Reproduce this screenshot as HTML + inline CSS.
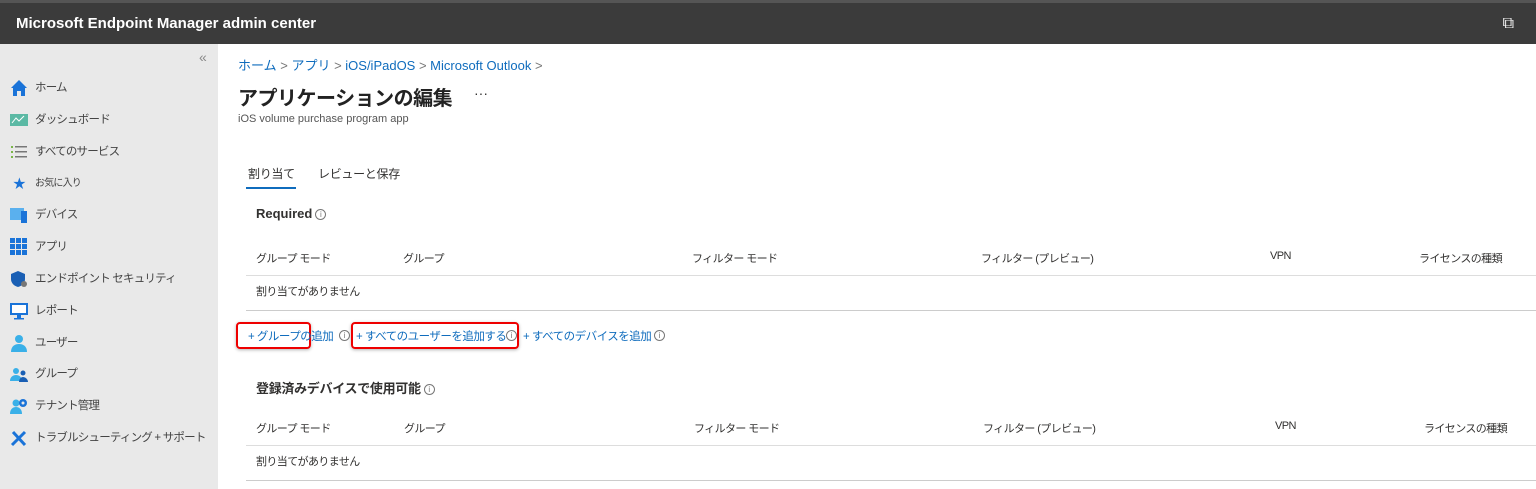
<!DOCTYPE html>
<html><head><meta charset="utf-8"><style>
*{margin:0;padding:0;box-sizing:border-box}
body{width:1536px;height:489px;overflow:hidden;background:#fff;font-family:"Liberation Sans","Noto Sans CJK JP",sans-serif;color:#323130;position:relative}
.top{position:absolute;left:0;top:0;width:1536px;height:44px;background:#3b3b3b;border-top:3px solid #555;color:#fff;font-weight:bold;font-size:15px;line-height:41px;padding-left:16px}
.side{position:absolute;left:0;top:44px;width:218px;height:445px;background:#e9e9e9}
.side .it{position:absolute;left:10px;font-size:11.5px;letter-spacing:-0.8px;white-space:nowrap;height:20px;line-height:20px;display:flex;align-items:center;color:#444}
.side .ic{width:18px;height:18px;margin-right:7px;display:inline-block;flex:none}
.a{position:absolute;font-size:12px;white-space:nowrap}
.h{font-size:11px;letter-spacing:-0.6px}
.l{font-size:11.5px;letter-spacing:-0.5px}
.blue{color:#0f6cbd}
.hline{position:absolute;height:1px;background:#ddd}
.red{position:absolute;border:2px solid #e00;border-radius:4px;box-shadow:0 1px 3px rgba(0,0,0,.3)}
.i{display:inline-block;width:11px;height:11px;border:1px solid #777;border-radius:50%;font-size:8px;line-height:9px;text-align:center;color:#777;vertical-align:1px;margin-left:3px;letter-spacing:0}
</style></head><body>
<div class="top">Microsoft Endpoint Manager admin center<span style="position:absolute;right:22px;top:0;font-weight:normal;font-size:16px">⧉</span></div>
<div class="side">
<div style="position:absolute;left:199px;top:5px;color:#888;font-size:14px">«</div>
<div class="it" style="top:34px"><svg class="ic" viewBox="0 0 18 18"><path d="M9 1L1 9h2v8h4v-5h4v5h4V9h2z" fill="#1a73d8"/></svg>ホーム</div>
<div class="it" style="top:66px"><svg class="ic" viewBox="0 0 18 18"><rect x="0" y="3" width="18" height="12" fill="#5bb9a4"/><path d="M2 12l4-5 3 3 5-5" stroke="#fff" fill="none"/></svg>ダッシュボード</div>
<div class="it" style="top:98px"><svg class="ic" viewBox="0 0 18 18"><g fill="#7ab648"><rect x="1" y="3" width="2" height="2"/><rect x="1" y="8" width="2" height="2"/><rect x="1" y="13" width="2" height="2"/></g><g fill="#777"><rect x="5" y="3" width="12" height="1.5"/><rect x="5" y="8" width="12" height="1.5"/><rect x="5" y="13" width="12" height="1.5"/></g></svg>すべてのサービス</div>
<div class="it" style="top:130px;font-size:10px"><span class="ic" style="color:#1a73d8;font-size:13px;text-align:center;line-height:18px">★</span>お気に入り</div>
<div class="it" style="top:161px"><svg class="ic" viewBox="0 0 18 18"><rect x="0" y="2" width="14" height="12" fill="#5ab0ee"/><rect x="11" y="5" width="6" height="12" fill="#1a73d8"/></svg>デバイス</div>
<div class="it" style="top:193px"><svg class="ic" viewBox="0 0 18 18"><g fill="#1a73d8"><rect x="0" y="0" width="5" height="5"/><rect x="6" y="0" width="5" height="5"/><rect x="12" y="0" width="5" height="5"/><rect x="0" y="6" width="5" height="5"/><rect x="6" y="6" width="5" height="5"/><rect x="12" y="6" width="5" height="5"/><rect x="0" y="12" width="5" height="5"/><rect x="6" y="12" width="5" height="5"/><rect x="12" y="12" width="5" height="5"/></g></svg>アプリ</div>
<div class="it" style="top:225px"><svg class="ic" viewBox="0 0 18 18"><path d="M8 1l7 3v5c0 4-3 7-7 8-4-1-7-4-7-8V4z" fill="#1a5fb4"/><circle cx="14" cy="14" r="3" fill="#777"/></svg>エンドポイント セキュリティ</div>
<div class="it" style="top:257px"><svg class="ic" viewBox="0 0 18 18"><rect x="0" y="1" width="18" height="12" fill="#1a73d8"/><rect x="2" y="3" width="14" height="8" fill="#fff"/><rect x="7" y="13" width="4" height="3" fill="#1a73d8"/><rect x="4" y="16" width="10" height="1.5" fill="#1a73d8"/></svg>レポート</div>
<div class="it" style="top:289px"><svg class="ic" viewBox="0 0 18 18"><circle cx="9" cy="5" r="4" fill="#3ab0e8"/><path d="M1 18c0-6 4-8 8-8s8 2 8 8z" fill="#3ab0e8"/></svg>ユーザー</div>
<div class="it" style="top:320px"><svg class="ic" viewBox="0 0 18 18"><circle cx="6" cy="6" r="3" fill="#3ab0e8"/><path d="M0 16c0-4 3-6 6-6s6 2 6 6z" fill="#3ab0e8"/><circle cx="13" cy="8" r="2.5" fill="#1a5fb4"/><path d="M9 17c0-3 2-5 4-5s5 2 5 5z" fill="#1a5fb4"/></svg>グループ</div>
<div class="it" style="top:352px"><svg class="ic" viewBox="0 0 18 18"><circle cx="6" cy="6" r="3.5" fill="#3ab0e8"/><path d="M0 17c0-5 3-7 6-7s6 2 6 7z" fill="#3ab0e8"/><circle cx="13" cy="6" r="4" fill="#1a73d8"/><circle cx="13" cy="6" r="1.5" fill="#e9e9e9"/></svg>テナント管理</div>
<div class="it" style="top:384px"><svg class="ic" viewBox="0 0 18 18"><path d="M2 16L15 3M3 3l12 13" stroke="#1a73d8" stroke-width="3"/></svg>トラブルシューティング + サポート</div>
</div>

<div class="a blue" style="left:238px;top:55px;font-size:13px">ホーム <span style="color:#777">&gt;</span> アプリ <span style="color:#777">&gt;</span> iOS/iPadOS <span style="color:#777">&gt;</span> Microsoft Outlook <span style="color:#777">&gt;</span></div>
<div class="a" style="left:238px;top:82px;font-size:20px;font-weight:bold;color:#222;letter-spacing:-0.5px">アプリケーションの編集</div>
<div class="a" style="left:474px;top:85px;font-size:14px">···</div>
<div class="a" style="left:238px;top:113px;font-size:11px;color:#555">iOS volume purchase program app</div>
<div class="a" style="left:248px;top:165px;letter-spacing:-0.3px">割り当て</div>
<div style="position:absolute;left:246px;top:187px;width:50px;height:2px;background:#0f6cbd"></div>
<div class="a" style="left:318px;top:165px;letter-spacing:-0.3px">レビューと保存</div>
<div class="a" style="left:256px;top:206px;font-weight:bold;font-size:13px">Required<span class="i" style="font-weight:normal">i</span></div>

<div class="a h" style="left:256px;top:250px">グループ モード</div>
<div class="a h" style="left:403px;top:250px">グループ</div>
<div class="a h" style="left:692px;top:250px">フィルター モード</div>
<div class="a h" style="left:981px;top:250px">フィルター (プレビュー)</div>
<div class="a h" style="left:1270px;top:250px">VPN</div>
<div class="a h" style="left:1419px;top:250px">ライセンスの種類</div>
<div class="hline" style="left:246px;top:275px;width:1290px"></div>
<div class="a h" style="left:256px;top:283px">割り当てがありません</div>
<div class="hline" style="left:246px;top:310px;width:1290px;background:#ccc"></div>

<div class="red" style="left:236px;top:322px;width:75px;height:27px"></div>
<div class="red" style="left:351px;top:322px;width:168px;height:27px"></div>
<div class="a blue l" style="left:248px;top:328px">+ グループの追加</div><div class="a" style="left:336px;top:328px"><span class="i">i</span></div>
<div class="a blue l" style="left:356px;top:328px">+ すべてのユーザーを追加する</div><div class="a" style="left:503px;top:328px"><span class="i">i</span></div>
<div class="a blue l" style="left:523px;top:328px">+ すべてのデバイスを追加</div><div class="a" style="left:651px;top:328px"><span class="i">i</span></div>

<div class="a" style="left:256px;top:378px;font-weight:bold;font-size:13px;letter-spacing:-0.3px">登録済みデバイスで使用可能<span class="i" style="font-weight:normal">i</span></div>
<div class="a h" style="left:256px;top:420px">グループ モード</div>
<div class="a h" style="left:404px;top:420px">グループ</div>
<div class="a h" style="left:694px;top:420px">フィルター モード</div>
<div class="a h" style="left:983px;top:420px">フィルター (プレビュー)</div>
<div class="a h" style="left:1275px;top:420px">VPN</div>
<div class="a h" style="left:1424px;top:420px">ライセンスの種類</div>
<div class="hline" style="left:246px;top:445px;width:1290px"></div>
<div class="a h" style="left:256px;top:453px">割り当てがありません</div>
<div class="hline" style="left:246px;top:480px;width:1290px;background:#ccc"></div>
</body></html>
